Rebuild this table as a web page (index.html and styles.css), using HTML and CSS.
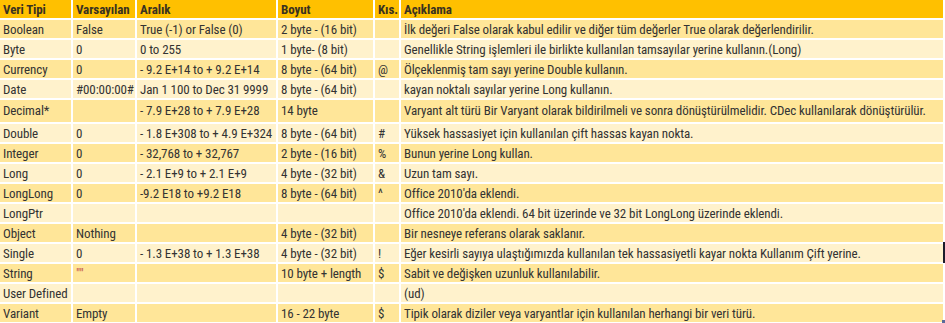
FILE: index.html
```html
<!DOCTYPE html>
<html lang="tr">
<head>
<meta charset="utf-8">
<title>VBA Veri Tipleri</title>
<link rel="stylesheet" href="styles.css">
</head>
<body>
<table class="types">
  <colgroup>
    <col class="c-type"><col class="c-def"><col class="c-range"><col class="c-size"><col class="c-abbr"><col class="c-desc">
  </colgroup>
  <thead>
    <tr><th>Veri Tipi</th><th>Varsayılan</th><th>Aralık</th><th>Boyut</th><th>Kıs.</th><th>Açıklama</th></tr>
  </thead>
  <tbody>
    <tr><td>Boolean</td><td>False</td><td>True (-1) or False (0)</td><td>2 byte - (16 bit)</td><td></td><td>İlk değeri False olarak kabul edilir ve diğer tüm değerler True olarak değerlendirilir.</td></tr>
    <tr><td>Byte</td><td>0</td><td>0 to 255</td><td>1 byte- (8 bit)</td><td></td><td>Genellikle String işlemleri ile birlikte kullanılan tamsayılar yerine kullanın.(Long)</td></tr>
    <tr><td>Currency</td><td>0</td><td>- 9.2 E+14 to + 9.2 E+14</td><td>8 byte - (64 bit)</td><td>@</td><td>Ölçeklenmiş tam sayı yerine Double kullanın.</td></tr>
    <tr><td>Date</td><td>#00:00:00#</td><td>Jan 1 100 to Dec 31 9999</td><td>8 byte - (64 bit)</td><td></td><td>kayan noktalı sayılar yerine Long kullanın.</td></tr>
    <tr class="tall"><td>Decimal*</td><td></td><td>- 7.9 E+28 to + 7.9 E+28</td><td>14 byte</td><td></td><td>Varyant alt türü Bir Varyant olarak bildirilmeli ve sonra dönüştürülmelidir. CDec kullanılarak dönüştürülür.</td></tr>
    <tr><td>Double</td><td>0</td><td>- 1.8 E+308 to + 4.9 E+324</td><td>8 byte - (64 bit)</td><td>#</td><td>Yüksek hassasiyet için kullanılan çift hassas kayan nokta.</td></tr>
    <tr><td>Integer</td><td>0</td><td>- 32,768 to + 32,767</td><td>2 byte - (16 bit)</td><td>%</td><td>Bunun yerine Long kullan.</td></tr>
    <tr><td>Long</td><td>0</td><td>- 2.1 E+9 to + 2.1 E+9</td><td>4 byte - (32 bit)</td><td>&amp;</td><td>Uzun tam sayı.</td></tr>
    <tr><td>LongLong</td><td>0</td><td>-9.2 E18 to +9.2 E18</td><td>8 byte - (64 bit)</td><td>^</td><td>Office 2010'da eklendi.</td></tr>
    <tr><td>LongPtr</td><td></td><td></td><td></td><td></td><td>Office 2010'da eklendi. 64 bit üzerinde ve 32 bit LongLong üzerinde eklendi.</td></tr>
    <tr><td>Object</td><td>Nothing</td><td></td><td>4 byte - (32 bit)</td><td></td><td>Bir nesneye referans olarak saklanır.</td></tr>
    <tr><td>Single</td><td>0</td><td>- 1.3 E+38 to + 1.3 E+38</td><td>4 byte - (32 bit)</td><td>!</td><td>Eğer kesirli sayıya ulaştığımızda kullanılan tek hassasiyetli kayar nokta Kullanım Çift yerine.</td></tr>
    <tr><td>String</td><td><span class="str">""</span></td><td></td><td>10 byte + length</td><td>$</td><td>Sabit ve değişken uzunluk kullanılabilir.</td></tr>
    <tr><td>User Defined</td><td></td><td></td><td></td><td></td><td>(ud)</td></tr>
    <tr><td>Variant</td><td>Empty</td><td></td><td>16 - 22 byte</td><td>$</td><td>Tipik olarak diziler veya varyantlar için kullanılan herhangi bir veri türü.</td></tr>
  </tbody>
</table>
<div class="edge-bar"></div>
<div class="edge-corner"></div>
</body>
</html>
```
FILE: styles.css
```css
html, body {
  margin: 0;
  padding: 0;
  background: #ffffff;
  overflow: hidden;
}
body {
  position: relative;
  width: 945px;
  height: 323px;
  font-family: "Roboto Condensed", Roboto, "Liberation Sans", sans-serif;
  font-size: 13px;
  color: #333333;
}
.types {
  border-collapse: separate;
  border-spacing: 0;
  table-layout: fixed;
  width: 945px;
}
.c-type { width: 73px; }
.c-def { width: 64px; }
.c-range { width: 141px; }
.c-size { width: 97px; }
.c-abbr { width: 26px; }
.c-desc { width: 544px; }
.types th,
.types td {
  box-sizing: border-box;
  height: 20px;
  padding: 1px 0 0 3px;
  border-right: 2px solid #ffffff;
  border-bottom: 2px solid #ffffff;
  text-align: left;
  vertical-align: top;
  line-height: 17px;
  white-space: nowrap;
  overflow: hidden;
  letter-spacing: -0.1px;
}
.types th {
  background: #ffc000;
  font-weight: bold;
  color: #3a3220;
}
.types tbody tr:nth-child(odd) td { background: #ffe699; }
.types tbody tr:nth-child(even) td { background: #fff2cc; }
.types tr.tall td { height: 24px; padding-top: 2px; }
.str { color: #c0504d; }
.edge-bar {
  position: absolute;
  right: 0;
  top: 242px;
  width: 2px;
  height: 21px;
  background: #1c1c2a;
}
.edge-corner {
  position: absolute;
  right: 0;
  bottom: 0;
  width: 3px;
  height: 3px;
  background: #5b6a9a;
}
```
